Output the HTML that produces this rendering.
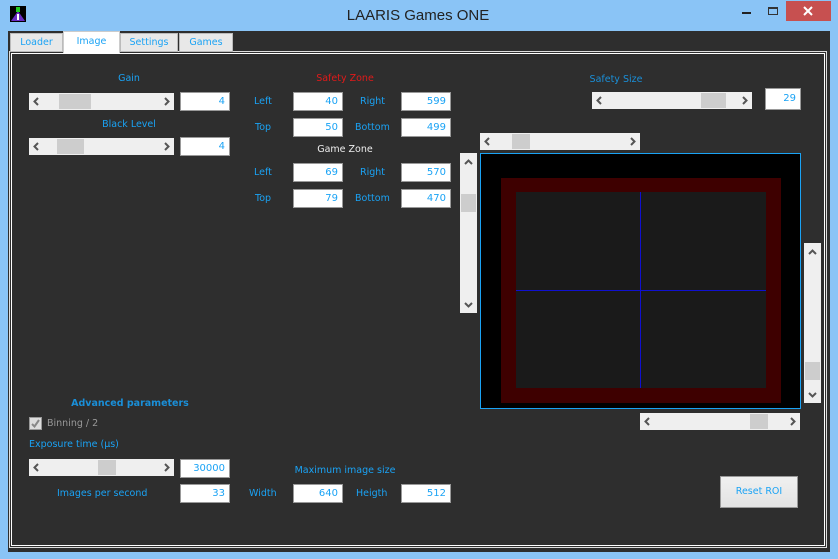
<!DOCTYPE html>
<html><head><meta charset="utf-8"><style>
*{margin:0;padding:0;box-sizing:border-box}
body{width:838px;height:559px;background:#8ac4f6;position:relative;overflow:hidden;font-family:"DejaVu Sans","Liberation Sans",sans-serif;font-size:9.5px;color:#1aa3f5}
.a{position:absolute}
.lbl{position:absolute;white-space:nowrap;line-height:12px}
.c{transform:translateX(-50%)}
.in{position:absolute;background:#fff;border:1px solid #999;height:19px;width:50px;text-align:right;padding-right:4px;line-height:17px;color:#1aa3f5;font-size:10px}
.hs{position:absolute;background:#efefef;height:17px}
.hs .t{position:absolute;top:1px;height:15px;background:#cdcdcd}
.hs svg,.vs svg{position:absolute}
.vs{position:absolute;background:#efefef;width:17px}
.vs .t{position:absolute;left:1px;width:15px;background:#cdcdcd}
</style></head><body>
<div class="a" style="left:10px;top:6px;width:16px;height:16px;background:#000"></div>
<div class="a" style="left:11px;top:11px;width:0;height:0;border-left:7px solid transparent;border-right:7px solid transparent;border-bottom:10px solid #6a2bc2"></div>
<div class="a" style="left:16px;top:7px;width:4px;height:5px;background:#2c2"></div>
<div class="a" style="left:17px;top:14px;width:2px;height:6px;background:#fff"></div>
<div class="lbl c" style="left:418px;top:7px;font-size:15px;line-height:18px;color:#222;font-family:'Liberation Sans',sans-serif">LAARIS Games ONE</div>
<div class="a" style="left:742px;top:12px;width:9px;height:2px;background:#222"></div>
<div class="a" style="left:768px;top:7px;width:10px;height:8px;border:1px solid #333;border-top-width:2px"></div>
<div class="a" style="left:786px;top:1px;width:45px;height:20px;background:#c75050"></div>
<svg class="a" style="left:803px;top:6px" width="10" height="10"><path d="M1 1L9 9M9 1L1 9" stroke="#fff" stroke-width="2"/></svg>
<div class="a" style="left:8px;top:31px;width:822px;height:521px;background:#2e2e2e"></div>
<div class="a" style="left:9px;top:51px;width:818px;height:497px;border:1px solid #ddd"></div>
<div class="a" style="left:11px;top:53px;width:814px;height:493px;border:1px solid #fff"></div>
<div class="a" style="left:10px;top:33px;width:53px;height:19px;background:#e8e8e8;border:1px solid #bbb;text-align:center;line-height:17px">Loader</div>
<div class="a" style="left:63px;top:31px;width:57px;height:22px;background:#fff;border:1px solid #ccc;border-bottom:none;text-align:center;line-height:20px">Image</div>
<div class="a" style="left:120px;top:33px;width:58px;height:19px;background:#e8e8e8;border:1px solid #bbb;text-align:center;line-height:17px">Settings</div>
<div class="a" style="left:179px;top:33px;width:54px;height:19px;background:#e8e8e8;border:1px solid #bbb;text-align:center;line-height:17px">Games</div>

<div class="lbl c" style="left:129px;top:73px">Gain</div>
<div class="hs" style="left:29px;top:93px;width:145px"><svg style="left:4px;top:4px" width="6" height="9"><path d="M5 1L1.5 4.5L5 8" stroke="#555" stroke-width="2" fill="none"/></svg><div class="t" style="left:30px;width:32px"></div><svg style="right:4px;top:4px" width="6" height="9"><path d="M1 1L4.5 4.5L1 8" stroke="#555" stroke-width="2" fill="none"/></svg></div>
<div class="in" style="left:180px;top:92px">4</div>
<div class="lbl c" style="left:129px;top:119px">Black Level</div>
<div class="hs" style="left:29px;top:138px;width:145px"><svg style="left:4px;top:4px" width="6" height="9"><path d="M5 1L1.5 4.5L5 8" stroke="#555" stroke-width="2" fill="none"/></svg><div class="t" style="left:28px;width:27px"></div><svg style="right:4px;top:4px" width="6" height="9"><path d="M1 1L4.5 4.5L1 8" stroke="#555" stroke-width="2" fill="none"/></svg></div>
<div class="in" style="left:180px;top:137px">4</div>

<div class="lbl c" style="left:345px;top:73px;color:#e01a1a">Safety Zone</div>
<div class="lbl" style="left:254px;top:96px">Left</div><div class="in" style="left:293px;top:92px">40</div>
<div class="lbl" style="left:360px;top:96px">Right</div><div class="in" style="left:401px;top:92px">599</div>
<div class="lbl" style="left:255px;top:122px">Top</div><div class="in" style="left:293px;top:118px">50</div>
<div class="lbl" style="left:355px;top:122px">Bottom</div><div class="in" style="left:401px;top:118px">499</div>
<div class="lbl c" style="left:345px;top:144px;color:#eee">Game Zone</div>
<div class="lbl" style="left:254px;top:167px">Left</div><div class="in" style="left:293px;top:163px">69</div>
<div class="lbl" style="left:360px;top:167px">Right</div><div class="in" style="left:401px;top:163px">570</div>
<div class="lbl" style="left:255px;top:193px">Top</div><div class="in" style="left:293px;top:189px">79</div>
<div class="lbl" style="left:355px;top:193px">Bottom</div><div class="in" style="left:401px;top:189px">470</div>

<div class="lbl c" style="left:616px;top:74px;color:#1a8fd8">Safety Size</div>
<div class="hs" style="left:592px;top:92px;width:160px"><svg style="left:4px;top:4px" width="6" height="9"><path d="M5 1L1.5 4.5L5 8" stroke="#555" stroke-width="2" fill="none"/></svg><div class="t" style="left:109px;width:25px"></div><svg style="right:4px;top:4px" width="6" height="9"><path d="M1 1L4.5 4.5L1 8" stroke="#555" stroke-width="2" fill="none"/></svg></div>
<div class="in" style="left:765px;top:88px;width:36px;height:22px;line-height:20px">29</div>

<div class="hs" style="left:480px;top:133px;width:160px"><svg style="left:4px;top:4px" width="6" height="9"><path d="M5 1L1.5 4.5L5 8" stroke="#555" stroke-width="2" fill="none"/></svg><div class="t" style="left:32px;width:18px"></div><svg style="right:4px;top:4px" width="6" height="9"><path d="M1 1L4.5 4.5L1 8" stroke="#555" stroke-width="2" fill="none"/></svg></div>
<div class="vs" style="left:460px;top:153px;height:160px"><svg style="left:4px;top:6px" width="9" height="6"><path d="M1 5L4.5 1.5L8 5" stroke="#555" stroke-width="2" fill="none"/></svg><div class="t" style="top:41px;height:18px"></div><svg style="left:4px;bottom:5px" width="9" height="6"><path d="M1 1L4.5 4.5L8 1" stroke="#555" stroke-width="2" fill="none"/></svg></div>
<div class="a" style="left:480px;top:153px;width:321px;height:256px;background:#000;border:1px solid #1aa3f5"></div>
<div class="a" style="left:501px;top:178px;width:280px;height:225px;background:#3e0000"></div>
<div class="a" style="left:516px;top:192px;width:250px;height:196px;background:#1a1a1a"></div>
<div class="a" style="left:640px;top:192px;width:1px;height:196px;background:#1010d0"></div>
<div class="a" style="left:516px;top:290px;width:250px;height:1px;background:#1010d0"></div>
<div class="vs" style="left:804px;top:243px;height:160px"><svg style="left:4px;top:6px" width="9" height="6"><path d="M1 5L4.5 1.5L8 5" stroke="#555" stroke-width="2" fill="none"/></svg><div class="t" style="top:119px;height:18px"></div><svg style="left:4px;bottom:5px" width="9" height="6"><path d="M1 1L4.5 4.5L8 1" stroke="#555" stroke-width="2" fill="none"/></svg></div>
<div class="hs" style="left:640px;top:413px;width:160px"><svg style="left:4px;top:4px" width="6" height="9"><path d="M5 1L1.5 4.5L5 8" stroke="#555" stroke-width="2" fill="none"/></svg><div class="t" style="left:110px;width:18px"></div><svg style="right:4px;top:4px" width="6" height="9"><path d="M1 1L4.5 4.5L1 8" stroke="#555" stroke-width="2" fill="none"/></svg></div>

<div class="lbl c" style="left:130px;top:398px;font-weight:bold;color:#1a8fd8">Advanced parameters</div>
<div class="a" style="left:29px;top:417px;width:13px;height:13px;background:#ddd;border:1px solid #999"></div>
<svg class="a" style="left:31px;top:419px" width="9" height="9"><path d="M1 5L3.5 7.5L8 1" stroke="#888" stroke-width="2" fill="none"/></svg>
<div class="lbl" style="left:47px;top:418px;color:#999">Binning / 2</div>
<div class="lbl" style="left:29px;top:439px">Exposure time (µs)</div>
<div class="hs" style="left:29px;top:459px;width:145px"><svg style="left:4px;top:4px" width="6" height="9"><path d="M5 1L1.5 4.5L5 8" stroke="#555" stroke-width="2" fill="none"/></svg><div class="t" style="left:69px;width:18px"></div><svg style="right:4px;top:4px" width="6" height="9"><path d="M1 1L4.5 4.5L1 8" stroke="#555" stroke-width="2" fill="none"/></svg></div>
<div class="in" style="left:180px;top:459px">30000</div>
<div class="lbl c" style="left:345px;top:465px">Maximum image size</div>
<div class="lbl" style="left:57px;top:488px">Images per second</div><div class="in" style="left:180px;top:484px">33</div>
<div class="lbl" style="left:249px;top:488px">Width</div><div class="in" style="left:293px;top:484px">640</div>
<div class="lbl" style="left:356px;top:488px">Heigth</div><div class="in" style="left:401px;top:484px">512</div>
<div class="a" style="left:720px;top:476px;width:78px;height:32px;background:linear-gradient(#f0f0f0,#e3e3e3);border:1px solid #999;text-align:center;line-height:30px">Reset ROI</div>
</body></html>
